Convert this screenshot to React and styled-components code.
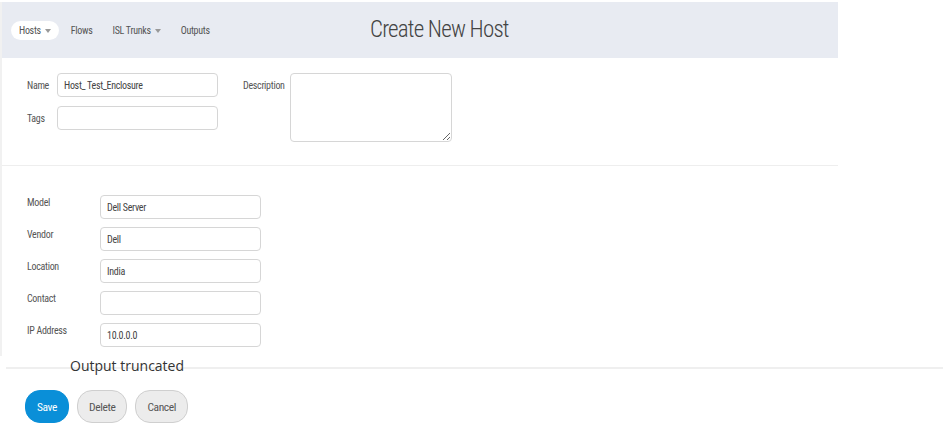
import React from 'react';
import styled, { createGlobalStyle } from 'styled-components';

const GlobalStyle = createGlobalStyle`
  html, body {
    margin: 0;
    padding: 0;
    background: #fff;
  }
  body {
    font-family: "Roboto Condensed", "Liberation Sans Narrow", Roboto, sans-serif;
    color: #555;
  }
`;

const Page = styled.div`
  width: 943px;
  height: 440px;
  overflow: hidden;
  padding-top: 2px;
  box-sizing: border-box;
`;

const Card = styled.div`
  width: 838px;
  border-left: 2px solid #f1f1f1;
  box-sizing: border-box;
`;

const Header = styled.header`
  height: 56px;
  background: #e8ebf2;
  display: flex;
  align-items: center;
  padding-left: 9px;
`;

const Nav = styled.nav`
  display: flex;
  align-items: center;
`;

const NavItem = styled.span`
  display: inline-flex;
  align-items: center;
  gap: 4px;
  height: 19px;
  padding: 0 ${(p) => (p.$active ? 8 : 9)}px;
  margin-right: ${(p) => (p.$active ? 3 : 2)}px;
  border-radius: 10px;
  font-size: 10px;
  letter-spacing: -0.3px;
  color: #555;
  background: ${(p) => (p.$active ? '#fff' : 'transparent')};
`;

const Caret = styled.span`
  width: 0;
  height: 0;
  border-left: 3px solid transparent;
  border-right: 3px solid transparent;
  border-top: 4px solid #999;
  margin-top: 1px;
`;

const Title = styled.h1`
  flex: 1;
  margin: 0 0 2px 0;
  padding-right: 180px;
  text-align: center;
  font-size: 23px;
  font-weight: 300;
  letter-spacing: -0.8px;
  color: #444;
`;

const TopForm = styled.div`
  display: flex;
  gap: 25px;
  padding: 15px 0 23px 25px;
  border-bottom: 1px solid #eee;
`;

const Column = styled.div`
  display: flex;
  flex-direction: column;
  gap: 9px;
`;

const Row = styled.label`
  display: flex;
  align-items: ${(p) => (p.$top ? 'flex-start' : 'center')};
  gap: ${(p) => p.$gap ?? 8}px;
`;

const Label = styled.span`
  font-size: 10px;
  letter-spacing: -0.3px;
  color: #555;
  flex-shrink: 0;
  width: ${(p) => (p.$w ? `${p.$w}px` : 'auto')};
  padding-top: ${(p) => (p.$top ? `${p.$top}px` : '0')};
`;

const Input = styled.input`
  width: 161px;
  height: 24px;
  box-sizing: border-box;
  border: 1px solid #d6d6d6;
  border-radius: 4px;
  padding: 0 6px;
  font: inherit;
  font-size: 10px;
  letter-spacing: -0.3px;
  color: #444;
  outline: none;
`;

const TextArea = styled.textarea`
  width: 162px;
  height: 69px;
  box-sizing: border-box;
  border: 1px solid #d6d6d6;
  border-radius: 4px;
  font: inherit;
  resize: both;
  outline: none;
`;

const Details = styled.div`
  display: flex;
  flex-direction: column;
  gap: 8px;
  padding: 29px 0 9px 25px;
`;

const Note = styled.div`
  font-family: "Open Sans", sans-serif;
  font-size: 14px;
  color: #333;
  padding-left: 70px;
  margin-top: 3px;
  height: 8px;
  line-height: 14px;
  position: relative;
  z-index: 1;
`;

const Footer = styled.div`
  margin-left: 6px;
  border-top: 2px solid #efefef;
  padding: 21px 0 0 19px;
  display: flex;
  gap: 8px;
`;

const Button = styled.button`
  height: 33px;
  padding: 0 11px;
  border-radius: 15px;
  border: 1px solid ${(p) => (p.$primary ? '#0a8fd8' : '#cfcfcf')};
  background: ${(p) => (p.$primary ? '#0a8fd8' : '#ececec')};
  color: ${(p) => (p.$primary ? '#fff' : '#555')};
  font: inherit;
  font-size: 11.5px;
  letter-spacing: -0.4px;
`;

const details = [
  ['Model', 'Dell Server'],
  ['Vendor', 'Dell'],
  ['Location', 'India'],
  ['Contact', ''],
  ['IP Address', '10.0.0.0'],
];

export default function App() {
  return (
    <>
      <GlobalStyle />
      <Page>
        <Card>
          <Header>
            <Nav>
              <NavItem $active>
                Hosts <Caret />
              </NavItem>
              <NavItem>Flows</NavItem>
              <NavItem>
                ISL Trunks <Caret />
              </NavItem>
              <NavItem>Outputs</NavItem>
            </Nav>
            <Title>Create New Host</Title>
          </Header>

          <TopForm>
            <Column>
              <Row>
                <Label $w={22}>Name</Label>
                <Input defaultValue="Host_ Test_Enclosure" />
              </Row>
              <Row>
                <Label $w={22}>Tags</Label>
                <Input />
              </Row>
            </Column>
            <Row $top $gap={5}>
              <Label $top={7}>Description</Label>
              <TextArea />
            </Row>
          </TopForm>

          <Details>
            {details.map(([label, value]) => (
              <Row key={label} $top $gap={0}>
                <Label $w={73} $top={2}>
                  {label}
                </Label>
                <Input defaultValue={value} />
              </Row>
            ))}
          </Details>
        </Card>

        <Note>Output truncated</Note>
        <Footer>
          <Button $primary>Save</Button>
          <Button>Delete</Button>
          <Button>Cancel</Button>
        </Footer>
      </Page>
    </>
  );
}
